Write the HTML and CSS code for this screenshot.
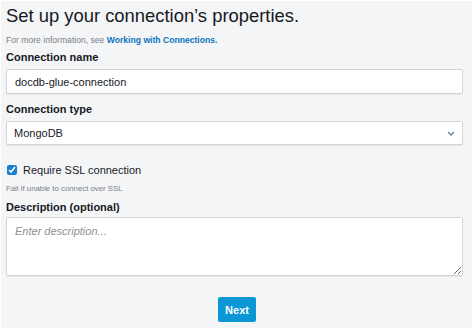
FILE: index.html
```html
<!DOCTYPE html>
<html lang="en">
<head>
  <meta charset="UTF-8" />
  <meta name="viewport" content="width=device-width, initial-scale=1" />
  <title>Set up your connection's properties</title>
  <link rel="stylesheet" href="styles.css">
</head>
<body>
  <main class="panel">
    <h1 class="title">Set up your connection’s properties.</h1>
    <p class="hint">For more information, see <a href="#">Working with Connections.</a></p>

    <form class="conn-form">
      <div class="form-group">
        <label for="connName">Connection name</label>
        <input type="text" id="connName" value="docdb-glue-connection">
      </div>

      <div class="form-group">
        <label for="connType">Connection type</label>
        <div class="select-wrap">
          <select id="connType">
            <option>MongoDB</option>
          </select>
          <svg class="chevron" viewBox="0 0 8 5" width="8" height="5">
            <path d="M1 1 L4 4 L7 1" fill="none" stroke="#5f7d95" stroke-width="1.3" />
          </svg>
        </div>
      </div>

      <div class="check-group">
        <label class="check">
          <input type="checkbox" checked>
          <span>Require SSL connection</span>
        </label>
        <p class="sub">Fail if unable to connect over SSL</p>
      </div>

      <div class="form-group desc-group">
        <label for="connDesc">Description (optional)</label>
        <textarea id="connDesc" placeholder="Enter description..."></textarea>
      </div>

      <div class="actions">
        <button type="button">Next</button>
      </div>
    </form>
  </main>
</body>
</html>
```

FILE: styles.css
```css
:root {
  --panel-bg: #f4f5f7;
  --text-color: #16191f;
  --muted: #7b8085;
  --link: #0a74b8;
  --border: #d2d4d6;
  --primary: #0b97d6;
}

* {
  margin: 0;
  padding: 0;
  box-sizing: border-box;
}
body {
  font-family: 'Liberation Sans', Arial, sans-serif;
  background-color: #fff;
  color: var(--text-color);
  padding: 1px 2px 3px 1px;
}

.panel {
  background-color: var(--panel-bg);
  height: 327px;
  padding: 4px 9px 0 5px;
}

.title {
  font-size: 18.4px;
  font-weight: 400;
  line-height: 22px;
  color: #16191f;
}
.hint {
  margin-top: 7px;
  font-size: 8.6px;
  line-height: 12px;
  color: var(--muted);
}
.hint a {
  color: var(--link);
  text-decoration: none;
  font-weight: 600;
}

/* Form */
.conn-form {
  margin-top: 3px;
}
.form-group {
  margin-bottom: 7px;
}
.form-group label {
  display: block;
  font-size: 11px;
  font-weight: 700;
  line-height: 16px;
  margin-bottom: 4px;
}
.form-group input,
.form-group select,
.form-group textarea {
  display: block;
  width: 100%;
  font-family: inherit;
  font-size: 11px;
  color: var(--text-color);
  background-color: #fff;
  border: 1px solid var(--border);
  border-radius: 2px;
  box-shadow: 0 1px 1px rgba(0, 0, 0, 0.06);
  outline: none;
}
.form-group input {
  height: 25px;
  padding: 0 8px;
}
.select-wrap {
  position: relative;
}
.form-group select {
  height: 24px;
  padding: 0 7px;
  appearance: none;
  -webkit-appearance: none;
}
.chevron {
  position: absolute;
  right: 8px;
  top: 10px;
}

/* Checkbox */
.check-group {
  margin-top: 18px;
  margin-bottom: 4px;
}
.check {
  display: flex;
  align-items: center;
  gap: 6px;
  font-size: 11px;
  line-height: 14px;
}
.check input {
  width: 10px;
  height: 10px;
  margin: 0 0 0 1px;
  accent-color: #1a7fd0;
}
.sub {
  margin-top: 6px;
  font-size: 7.8px;
  line-height: 12px;
  color: var(--muted);
}

.desc-group label {
  margin-bottom: 2px;
}
.form-group textarea {
  height: 59px;
  padding: 7px 8px;
  resize: vertical;
}
.form-group textarea::placeholder {
  color: #8d9196;
  font-style: italic;
}

/* Actions */
.actions {
  display: flex;
  justify-content: center;
  margin-top: 21px;
}
.actions button {
  width: 38px;
  height: 25px;
  background-color: var(--primary);
  color: #fff;
  border: none;
  border-radius: 2px;
  font-family: inherit;
  font-size: 11px;
  font-weight: 700;
  cursor: pointer;
  margin-left: 5px;
}
```
